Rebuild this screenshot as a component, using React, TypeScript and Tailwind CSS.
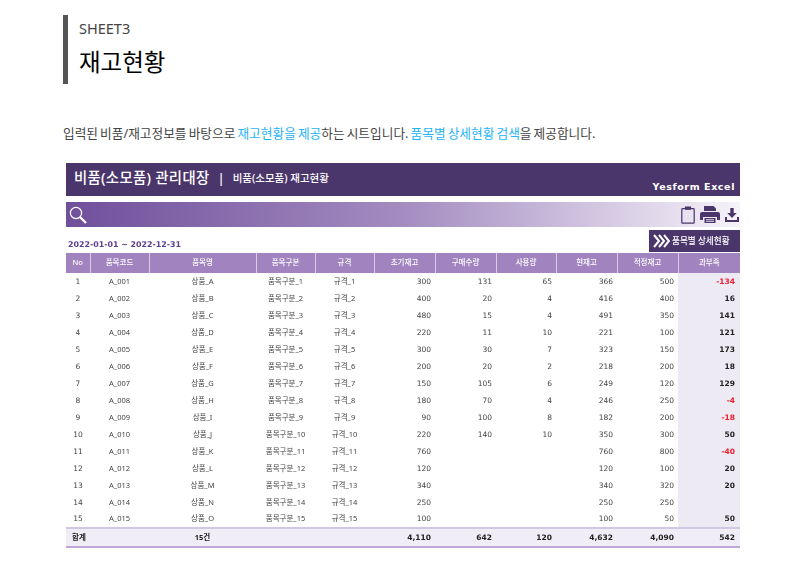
const KR = "font-['Noto_Sans','Noto_Sans_CJK_KR',sans-serif]";
const NUM = "font-['DejaVu_Sans','Noto_Sans_CJK_KR',sans-serif]";

const widths = [24, 59, 107, 59, 59, 61, 61, 60, 61, 61, 62];
const headers = ["No", "품목코드", "품목명", "품목구분", "규격", "초기재고", "구매수량", "사용량", "현재고", "적정재고", "과부족"];

const rows: (number | null)[][] = [
  [300, 131, 65, 366, 500, -134],
  [400, 20, 4, 416, 400, 16],
  [480, 15, 4, 491, 350, 141],
  [220, 11, 10, 221, 100, 121],
  [300, 30, 7, 323, 150, 173],
  [200, 20, 2, 218, 200, 18],
  [150, 105, 6, 249, 120, 129],
  [180, 70, 4, 246, 250, -4],
  [90, 100, 8, 182, 200, -18],
  [220, 140, 10, 350, 300, 50],
  [760, null, null, 760, 800, -40],
  [120, null, null, 120, 100, 20],
  [340, null, null, 340, 320, 20],
  [250, null, null, 250, 250, null],
  [100, null, null, 100, 50, 50],
];
const names = "ABCDEFGHIJKLMNO";
const totals = ["4,110", "642", "120", "4,632", "4,090", "542"];

function Chevrons() {
  return (
    <svg width="17" height="14" viewBox="0 0 17 14" fill="none" stroke="white" strokeWidth="2">
      <path d="M1 1l5 6-5 6M6 1l5 6-5 6M11 1l5 6-5 6" />
    </svg>
  );
}

function SearchIcon() {
  return (
    <svg width="18" height="18" viewBox="0 0 18 18" fill="none" stroke="white">
      <circle cx="7" cy="7" r="5.6" strokeWidth="1.2" />
      <path d="M11 11l6 6" strokeWidth="2.2" />
    </svg>
  );
}

function ClipboardIcon() {
  return (
    <svg width="14" height="18" viewBox="0 0 14 18" fill="none" stroke="#4b366b" strokeWidth="1.2">
      <rect x="0.8" y="2.6" width="12.4" height="14.6" rx="0.8" />
      <path d="M4.5 3.2V1h5v2.2z" fill="#4b366b" />
    </svg>
  );
}

function PrinterIcon() {
  return (
    <svg width="20" height="17" viewBox="0 0 20 17" fill="#4b366b">
      <path d="M4 0h9.5L16 2.5V5H4z" />
      <path d="M2 6h16a2 2 0 0 1 2 2v6h-3v-3H3v3H0V8a2 2 0 0 1 2-2z" />
      <path d="M4.5 12h11v5h-11z" />
      <path d="M6 13.2h8v1H6zM6 15h8v.8H6z" fill="#e6e0ee" />
    </svg>
  );
}

function DownloadIcon() {
  return (
    <svg width="14" height="14" viewBox="0 0 14 14" fill="#4b366b">
      <path d="M5.3 0h3.4v5h3L7 10 2.3 5h3z" />
      <path d="M0 9h2v3h10V9h2v5H0z" />
    </svg>
  );
}

export default function App() {
  return (
    <div className={`h-[571px] w-[800px] overflow-hidden bg-white ${KR}`}>
      <div className="ml-[63px] pt-[15px]">
        <div className="h-[69px] border-l-[5px] border-[#555555] pl-[11px]">
          <p className="pt-[3px] text-[14.5px] leading-5 text-[#444444]">SHEET3</p>
          <h1 className="mt-[8px] text-[23.5px] leading-8 text-black">재고현황</h1>
        </div>
        <p className="mt-[39px] text-[12.7px] leading-5 text-[#444444] [word-spacing:-1.2px]">
          입력된 비품/재고정보를 바탕으로 <span className="text-[#1eb4f5]">재고현황을 제공</span>하는 시트입니다.{" "}
          <span className="text-[#1eb4f5]">품목별 상세현황 검색</span>을 제공합니다.
        </p>
      </div>

      <div className="ml-[66px] mt-[20px] w-[674px] blur-[0.3px]">
        <div className="flex h-[33px] items-start justify-between bg-[#4b366b] pl-2 pr-[5px] text-white">
          <div className="flex items-center pt-[5px]">
            <span className="text-[14.4px] font-medium leading-5 tracking-[0.3px]">비품(소모품) 관리대장</span>
            <span className="mx-[8px] text-[13px] font-medium leading-5">|</span>
            <span className="text-[10.5px] font-medium leading-5">비품(소모품) 재고현황</span>
          </div>
          <span className={`pt-[16px] text-[9.5px] font-bold leading-4 tracking-[0.6px] ${NUM}`}>Yesform Excel</span>
        </div>

        <div className="mt-[6px] flex h-[25px] items-center justify-between bg-gradient-to-r from-[#704f9b] via-[#a48cc0] to-[#f6f3f9] pl-[3px]">
          <SearchIcon />
          <div className="flex items-center gap-[5px] pr-[1px]">
            <ClipboardIcon />
            <PrinterIcon />
            <DownloadIcon />
          </div>
        </div>

        <div className="mt-[2px] flex h-[24px] items-center justify-between">
          <span className={`pl-[2px] pt-[8px] text-[7.9px] font-bold text-[#5c3d8f] ${NUM}`}>2022-01-01 ~ 2022-12-31</span>
          <div className="flex h-[22px] w-[91px] items-center gap-[2px] bg-[#4b366b] pl-[4px] text-[8.6px] font-medium text-white">
            <Chevrons />
            품목별 상세현황
          </div>
        </div>

        <table className="table-fixed border-collapse text-[7.5px] text-[#444444]">
          <colgroup>
            {widths.map((w, i) => (
              <col key={i} style={{ width: w }} />
            ))}
          </colgroup>
          <thead>
            <tr className="h-[20px] bg-[#a083bf] text-white">
              {headers.map((h) => (
                <th key={h} className="border-l border-[#d9cde6] p-0 font-medium first:border-l-0">
                  {h}
                </th>
              ))}
            </tr>
          </thead>
          <tbody>
            {rows.map((r, i) => (
              <tr key={i} className="h-[17px]">
                <td className={`p-0 text-center font-medium ${NUM}`}>{i + 1}</td>
                <td className="p-0 text-center">A_{String(i + 1).padStart(3, "0")}</td>
                <td className="p-0 text-center">상품_{names[i]}</td>
                <td className="p-0 text-center">품목구분_{i + 1}</td>
                <td className="p-0 text-center">규격_{i + 1}</td>
                {r.map((v, j) =>
                  j === 5 ? (
                    <td
                      key={j}
                      className={`bg-[#eeeaf4] p-0 pr-[5px] text-right font-bold ${NUM} ${v !== null && v < 0 ? "text-[#f01c2c]" : "text-[#222222]"}`}
                    >
                      {v}
                    </td>
                  ) : (
                    <td key={j} className={`p-0 pr-[4px] text-right ${NUM}`}>
                      {v}
                    </td>
                  ),
                )}
              </tr>
            ))}
          </tbody>
          <tfoot>
            <tr className="h-[19px] border-y-2 border-t-[#d3c8e2] border-b-[#bda9d6] bg-[#f1edf6] font-bold text-[#222222]">
              <td className="p-0 pl-[6px]" colSpan={2}>합계</td>
              <td className="p-0 text-center">15건</td>
              <td className="p-0" colSpan={2} />
              {totals.map((t, i) => (
                <td key={t} className={`p-0 text-right ${NUM} ${i === 5 ? "pr-[5px]" : "pr-[4px]"}`}>
                  {t}
                </td>
              ))}
            </tr>
          </tfoot>
        </table>
      </div>
    </div>
  );
}
